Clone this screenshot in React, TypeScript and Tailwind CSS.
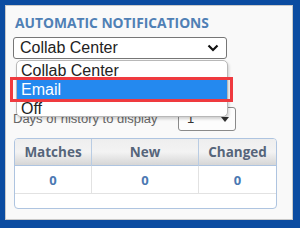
export default function App() {
  return (
    <div className="h-[228px] w-[300px] bg-[#0b4ca1] pb-[8px] pl-[5px] pr-[7px] pt-[5px]">
      <div className="relative h-full border border-[#c9c9c9] bg-[#f9f9f9] pl-[7px] pt-[9px] font-['Open_Sans',sans-serif]">
        <h3 className="ml-[2px] text-[13.8px] font-bold leading-[16px] text-[#4f80b5]">AUTOMATIC NOTIFICATIONS</h3>

        <div className="mt-[6px] flex h-[22px] w-[214px] items-center justify-between rounded-[3px] border border-[#767676] bg-white pl-[6px] pr-[7px] font-['Liberation_Sans',Arial,sans-serif] text-[16px] leading-[20px] text-[#222]">
          <span>Collab Center</span>
          <svg width="12" height="8" viewBox="0 0 12 8" fill="none">
            <path d="M1.5 1.5 6 6l4.5-4.5" stroke="#111" strokeWidth="2.2" />
          </svg>
        </div>

        <div className="mt-[48px] flex items-center justify-between pr-[56px]">
          <span className="font-['Liberation_Sans',Arial,sans-serif] text-[13px] text-[#666]">Days of history to display</span>
          <div className="flex h-[24px] w-[58px] items-center justify-between rounded-[3px] border border-[#8a8a8a] bg-[#fdfdfd] pl-[8px] pr-[6px] font-['Liberation_Sans',Arial,sans-serif] text-[13px] text-[#333]">
            <span>1</span>
            <svg width="8" height="5" viewBox="0 0 8 5">
              <path d="M0 0h8L4 5z" fill="#333" />
            </svg>
          </div>
        </div>

        <div className="mt-[7px] ml-px w-[263px] overflow-hidden rounded-[4px] border border-[#aec4e0] bg-white">
          <div className="grid h-[27px] grid-cols-[77px_107px_1fr] border-b border-[#aec4e0] bg-gradient-to-b from-[#eeeeee] via-[#f3f3f3] to-[#d6d6d6] text-[13.5px] font-bold leading-[27px] text-[#56657a]">
            <div className="border-r border-[#b9cce3] text-center">Matches</div>
            <div className="border-r border-[#b9cce3] text-center">New</div>
            <div className="text-center">Changed</div>
          </div>
          <div className="grid h-[28px] grid-cols-[77px_107px_1fr] border-b border-[#e2e2e2] text-[13px] font-bold leading-[28px] text-[#4a78b2]">
            <div className="border-r border-[#e2e2e2] text-center">0</div>
            <div className="border-r border-[#e2e2e2] text-center">0</div>
            <div className="text-center">0</div>
          </div>
          <div className="h-[14px]" />
        </div>

        <div className="absolute left-[10px] top-[54px] h-[57px] w-[212px] overflow-hidden rounded-[5px] border border-[#b8b8b8] bg-white font-['Liberation_Sans',Arial,sans-serif] text-[16px] leading-[19px] text-[#222] shadow-[1px_2px_3px_rgba(0,0,0,0.18)]">
          <div className="h-[19px] pl-[4px]">Collab Center</div>
          <div className="h-[19px] bg-[#2489ef] pl-[4px] text-white">Email</div>
          <div className="h-[19px] pl-[4px]">Off</div>
        </div>

        <div className="absolute left-[4px] top-[71px] h-[25px] w-[223px] border-[3px] border-[#ef3a3f]" />
      </div>
    </div>
  );
}
